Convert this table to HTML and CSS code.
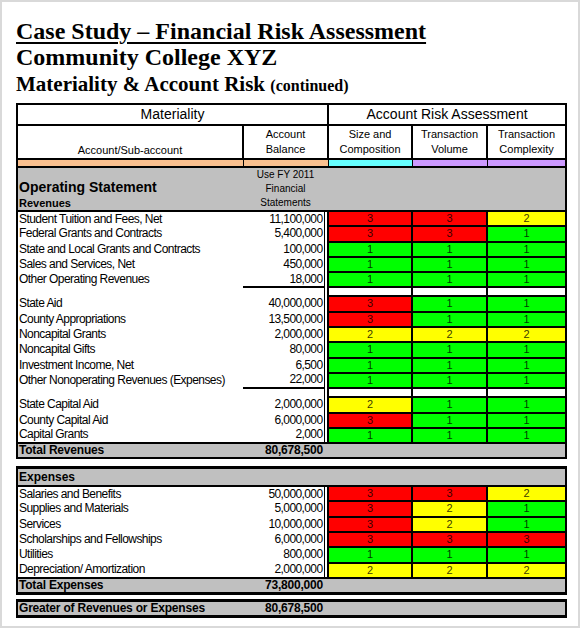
FILE: index.html
```html
<!DOCTYPE html>
<html>
<head>
    <title>Case Study - Financial Risk Assessment</title>
    <link rel="stylesheet" href="styles.css">
</head>
<body>
    <div class="page">
        <h1 class="title"><span>Case Study – Financial Risk Assessment</span></h1>
        <h2 class="college">Community College XYZ</h2>
        <h3 class="subtitle">Materiality &amp; Account Risk <small>(continued)</small></h3>

        <table class="sheet">
            <colgroup>
                <col class="c-acct"><col class="c-bal"><col class="c-gap"><col class="c-size"><col class="c-vol"><col class="c-comp">
            </colgroup>
            <tr class="group-head">
                <th colspan="3">Materiality</th>
                <th colspan="3">Account Risk Assessment</th>
            </tr>
            <tr class="col-head">
                <th class="bottom">Account/Sub-account</th>
                <th colspan="2">Account<br>Balance</th>
                <th>Size and<br>Composition</th>
                <th>Transaction<br>Volume</th>
                <th>Transaction<br>Complexity</th>
            </tr>
            <tr class="strip">
                <td class="orange"></td>
                <td class="orange" colspan="2"></td>
                <td class="cyan"></td>
                <td class="purple"></td>
                <td class="purple"></td>
            </tr>
            <tr class="section">
                <td class="acct">
                    <div class="section-title">Operating Statement</div>
                    <div class="sub-title">Revenues</div>
                </td>
                <td class="note" colspan="2">Use FY 2011<br>Financial<br>Statements</td>
                <td colspan="3"></td>
            </tr>

            <tr class="data"><td class="acct">Student Tuition and Fees, Net</td><td class="bal">11,100,000</td><td class="gap"></td><td class="r red">3</td><td class="r red">3</td><td class="r yellow">2</td></tr>
            <tr class="data"><td class="acct">Federal Grants and Contracts</td><td class="bal">5,400,000</td><td class="gap"></td><td class="r red">3</td><td class="r red">3</td><td class="r green">1</td></tr>
            <tr class="data"><td class="acct">State and Local Grants and Contracts</td><td class="bal">100,000</td><td class="gap"></td><td class="r green">1</td><td class="r green">1</td><td class="r green">1</td></tr>
            <tr class="data"><td class="acct">Sales and Services, Net</td><td class="bal">450,000</td><td class="gap"></td><td class="r green">1</td><td class="r green">1</td><td class="r green">1</td></tr>
            <tr class="data"><td class="acct">Other Operating Revenues</td><td class="bal sum">18,000</td><td class="gap"></td><td class="r green">1</td><td class="r green">1</td><td class="r green">1</td></tr>
            <tr class="spacer"><td class="acct"></td><td class="bal"></td><td class="gap"></td><td class="r"></td><td class="r"></td><td class="r"></td></tr>

            <tr class="data"><td class="acct">State Aid</td><td class="bal">40,000,000</td><td class="gap"></td><td class="r red">3</td><td class="r green">1</td><td class="r green">1</td></tr>
            <tr class="data"><td class="acct">County Appropriations</td><td class="bal">13,500,000</td><td class="gap"></td><td class="r red">3</td><td class="r green">1</td><td class="r green">1</td></tr>
            <tr class="data"><td class="acct">Noncapital Grants</td><td class="bal">2,000,000</td><td class="gap"></td><td class="r yellow">2</td><td class="r yellow">2</td><td class="r yellow">2</td></tr>
            <tr class="data"><td class="acct">Noncapital Gifts</td><td class="bal">80,000</td><td class="gap"></td><td class="r green">1</td><td class="r green">1</td><td class="r green">1</td></tr>
            <tr class="data"><td class="acct">Investment Income, Net</td><td class="bal">6,500</td><td class="gap"></td><td class="r green">1</td><td class="r green">1</td><td class="r green">1</td></tr>
            <tr class="data"><td class="acct">Other Nonoperating Revenues (Expenses)</td><td class="bal sum">22,000</td><td class="gap"></td><td class="r green">1</td><td class="r green">1</td><td class="r green">1</td></tr>
            <tr class="spacer"><td class="acct"></td><td class="bal"></td><td class="gap"></td><td class="r"></td><td class="r"></td><td class="r"></td></tr>

            <tr class="data"><td class="acct">State Capital Aid</td><td class="bal">2,000,000</td><td class="gap"></td><td class="r yellow">2</td><td class="r green">1</td><td class="r green">1</td></tr>
            <tr class="data"><td class="acct">County Capital Aid</td><td class="bal">6,000,000</td><td class="gap"></td><td class="r red">3</td><td class="r green">1</td><td class="r green">1</td></tr>
            <tr class="data"><td class="acct">Capital Grants</td><td class="bal">2,000</td><td class="gap"></td><td class="r green">1</td><td class="r green">1</td><td class="r green">1</td></tr>
            <tr class="total"><td class="acct">Total Revenues</td><td class="bal">80,678,500</td><td colspan="4"></td></tr>
        </table>

        <table class="sheet block">
            <colgroup>
                <col class="c-acct"><col class="c-bal"><col class="c-gap"><col class="c-size"><col class="c-vol"><col class="c-comp">
            </colgroup>
            <tr class="head-row"><td class="acct" colspan="6">Expenses</td></tr>
            <tr class="data"><td class="acct">Salaries and Benefits</td><td class="bal">50,000,000</td><td class="gap"></td><td class="r red">3</td><td class="r red">3</td><td class="r yellow">2</td></tr>
            <tr class="data"><td class="acct">Supplies and Materials</td><td class="bal">5,000,000</td><td class="gap"></td><td class="r red">3</td><td class="r yellow">2</td><td class="r green">1</td></tr>
            <tr class="data"><td class="acct">Services</td><td class="bal">10,000,000</td><td class="gap"></td><td class="r red">3</td><td class="r yellow">2</td><td class="r green">1</td></tr>
            <tr class="data"><td class="acct">Scholarships and Fellowships</td><td class="bal">6,000,000</td><td class="gap"></td><td class="r red">3</td><td class="r red">3</td><td class="r red">3</td></tr>
            <tr class="data"><td class="acct">Utilities</td><td class="bal">800,000</td><td class="gap"></td><td class="r green">1</td><td class="r green">1</td><td class="r green">1</td></tr>
            <tr class="data"><td class="acct">Depreciation/ Amortization</td><td class="bal">2,000,000</td><td class="gap"></td><td class="r yellow">2</td><td class="r yellow">2</td><td class="r yellow">2</td></tr>
            <tr class="total"><td class="acct">Total Expenses</td><td class="bal">73,800,000</td><td colspan="4"></td></tr>
        </table>

        <table class="sheet block last">
            <colgroup>
                <col class="c-acct"><col class="c-bal"><col class="c-gap"><col class="c-size"><col class="c-vol"><col class="c-comp">
            </colgroup>
            <tr class="total"><td class="acct">Greater of Revenues or Expenses</td><td class="bal">80,678,500</td><td colspan="4"></td></tr>
        </table>
    </div>
</body>
</html>
```

FILE: styles.css
```css
body {
    margin: 0;
    font-family: "Liberation Sans", Arial, sans-serif;
    background: white;
}

.page {
    width: 576px;
    height: 624px;
    border: 2px solid #d9d9d9;
    overflow: hidden;
}

.title,
.college,
.subtitle {
    margin: 0;
    padding-left: 14px;
    font-family: "Liberation Serif", "Times New Roman", serif;
    font-weight: bold;
    color: black;
}

.title {
    font-size: 24px;
    line-height: 26px;
    padding-top: 16px;
}

.title span {
    text-decoration: underline;
    text-decoration-thickness: 2px;
    text-underline-offset: 3px;
}

.college {
    font-size: 24px;
    line-height: 27px;
}

.subtitle {
    font-size: 21px;
    line-height: 26px;
}

.subtitle small {
    font-size: 16px;
}

/* spreadsheet */
.sheet {
    border-collapse: collapse;
    table-layout: fixed;
    margin: 4px 0 0 14px;
    width: 550px;
    border: 2px solid black;
    font-size: 12px;
    color: black;
}

.sheet.block {
    margin-top: 7px;
    border-width: 3px 2px;
}

.sheet.last {
    margin-top: 4px;
}

.c-acct { width: 226px; }
.c-bal { width: 81px; }
.c-gap { width: 4px; }
.c-size { width: 84px; }
.c-vol { width: 75px; }
.c-comp { width: 79px; }

.sheet th,
.sheet td {
    padding: 0;
}

.group-head th {
    font-weight: normal;
    font-size: 14px;
    line-height: 19px;
    border: 2px solid black;
}

.col-head th {
    font-weight: normal;
    font-size: 11px;
    line-height: 15px;
    height: 32px;
    border: 2px solid black;
    vertical-align: middle;
}

.col-head th.bottom {
    vertical-align: bottom;
}

.strip td {
    height: 6px;
    border: 1px solid black;
    border-bottom-width: 2px;
}

.orange { background: #fac08f; }
.cyan { background: #66ffff; }
.purple { background: #cc99ff; }

.section td {
    background: #c0c0c0;
    height: 42px;
    border-bottom: 2px solid black;
    vertical-align: bottom;
}

.section-title {
    font-size: 14px;
    font-weight: bold;
    line-height: 17px;
    letter-spacing: 0;
}

.sub-title {
    font-size: 11px;
    font-weight: bold;
    line-height: 14px;
    letter-spacing: 0;
}

.note {
    font-size: 10px;
    line-height: 14px;
    letter-spacing: 0 !important;
    text-align: center;
}

.acct {
    padding-left: 1px !important;
    letter-spacing: -0.55px;
    white-space: nowrap;
}

.data td {
    line-height: 13.3px;
}

.bal {
    text-align: right;
    letter-spacing: -0.6px;
    border-right: 1px solid black;
    padding-right: 1px !important;
}

.bal.sum {
    border-bottom: 2px solid black;
}

.r {
    border: 2px solid black;
    text-align: center;
    font-size: 11px;
    color: rgba(0, 0, 0, 0.8);
}

.spacer td {
    height: 7px;
}

.red { background: #ff0000; }
.green { background: #00ff00; }
.yellow { background: #ffff00; }

.total td {
    background: #c0c0c0;
    font-weight: bold;
    line-height: 13px;
    letter-spacing: -0.2px;
    border-top: 2px solid black;
}

.total .bal {
    border-right: none;
}

.head-row td {
    background: #c0c0c0;
    font-weight: bold;
    line-height: 16px;
    letter-spacing: 0;
    border-bottom: 2px solid black;
}
```
